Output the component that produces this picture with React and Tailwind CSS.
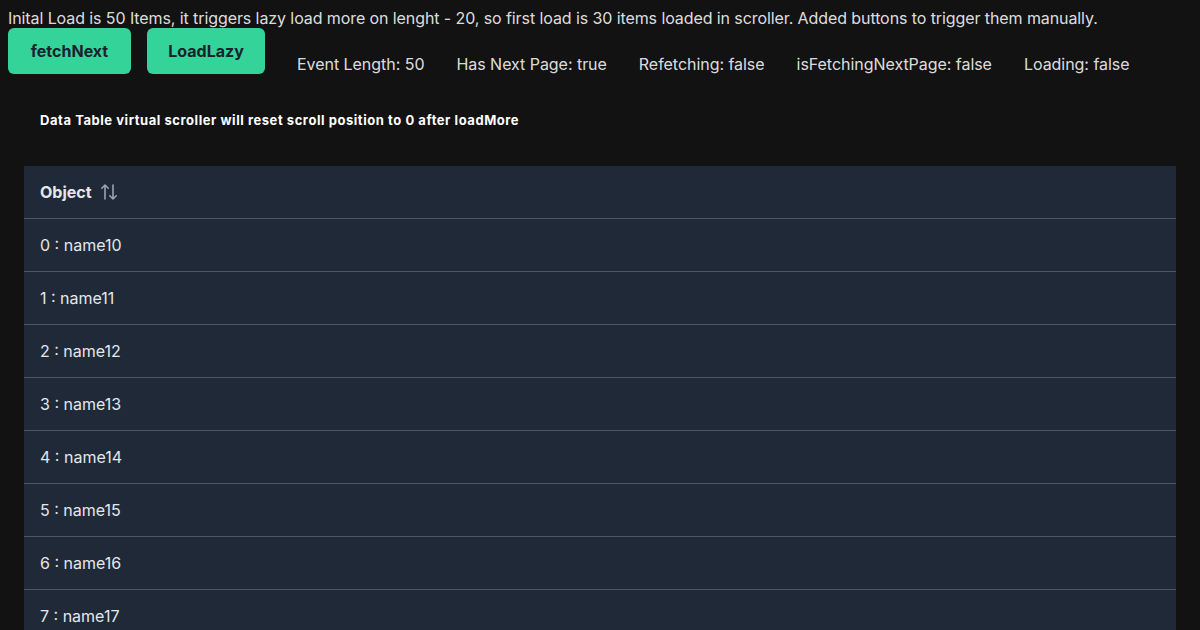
export default function App() {
  const rows = Array.from({ length: 8 }, (_, i) => `${i} : name${10 + i}`);
  return (
    <div className="min-h-[630px] h-[630px] overflow-hidden bg-[#121212] text-[rgba(255,255,255,0.87)]" style={{ fontFamily: 'Inter, "Noto Sans", sans-serif' }}>
      <div className="px-2 pt-2">
        <div className="text-[16px] leading-[20px] tracking-[-0.09px]">
          Inital Load is 50 Items, it triggers lazy load more on lenght - 20, so first load is 30 items loaded in scroller. Added buttons to trigger them manually.
        </div>
        <div className="flex items-start">
          <button className="h-[46px] w-[123px] rounded-md bg-[#34d399] text-[16px] font-bold text-[#1a222c]">fetchNext</button>
          <button className="ml-4 h-[46px] w-[118px] rounded-md bg-[#34d399] text-[16px] font-bold text-[#1a222c]">LoadLazy</button>
          <div className="ml-8 mt-[24px] flex gap-8 text-[16px] leading-6 tracking-[-0.04px]">
            <span>Event Length: 50</span>
            <span>Has Next Page: true</span>
            <span>Refetching: false</span>
            <span>isFetchingNextPage: false</span>
            <span>Loading: false</span>
          </div>
        </div>
      </div>
      <div className="px-6">
        <div className="px-4 pt-[34px] pb-[36px] text-[13px] font-bold leading-[20px] tracking-[0.55px] text-white">
          Data Table virtual scroller will reset scroll position to 0 after loadMore
        </div>
        <div className="bg-[#1f2937]">
          <div className="flex h-[53px] items-center border-b border-[#4b5563] px-4 text-[16px] font-bold text-[#e5e7eb]">
            <span>Object</span>
            <svg className="ml-2" width="18" height="18" viewBox="0 0 18 18" fill="none" stroke="#9ca3af" strokeWidth="1.6" strokeLinecap="round" strokeLinejoin="round">
              <path d="M5 16V2M1.8 5.2L5 2l3.2 3.2" />
              <path d="M13 2v14M9.8 12.8L13 16l3.2-3.2" />
            </svg>
          </div>
          {rows.map((r) => (
            <div key={r} className="flex h-[53px] items-center border-b border-[#4b5563] px-4 text-[16px] text-[#e5e7eb]">
              {r}
            </div>
          ))}
        </div>
      </div>
    </div>
  );
}
